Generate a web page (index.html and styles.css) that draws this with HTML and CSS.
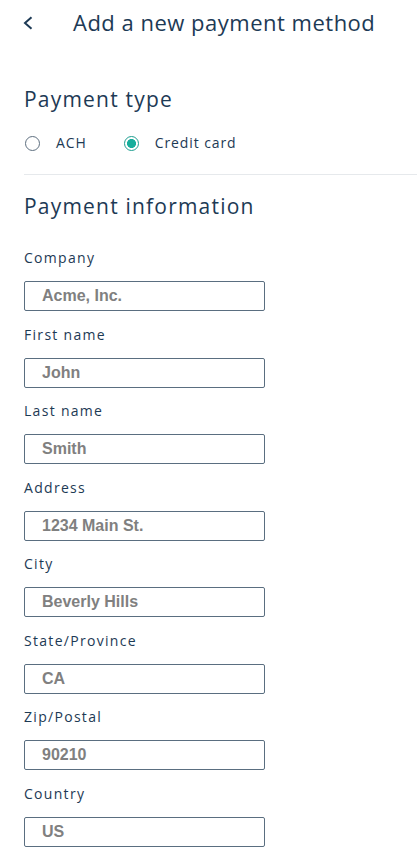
FILE: index.html
```html
<!DOCTYPE html>
<html lang="en">
<head>
<meta charset="utf-8">
<title>Add a new payment method</title>
<link rel="stylesheet" href="styles.css">
</head>
<body>
<div class="page">
  <header class="topbar">
    <button class="back" aria-label="Back">
      <svg width="10" height="14" viewBox="0 0 10 14"><path d="M8.5 1.2 L2 7 L8.5 12.8" fill="none" stroke="#1d3a55" stroke-width="2"/></svg>
    </button>
    <h1 class="title">Add a new payment method</h1>
  </header>

  <section class="type-section">
    <h2 class="section-title">Payment type</h2>
    <div class="radios">
      <label class="radio"><span class="dot"></span><span class="radio-text">ACH</span></label>
      <label class="radio checked"><span class="dot"></span><span class="radio-text">Credit card</span></label>
    </div>
  </section>

  <section class="info-section">
    <h2 class="section-title">Payment information</h2>
    <div class="fields">
      <div class="field"><div class="label">Company</div><div class="input">Acme, Inc.</div></div>
      <div class="field"><div class="label">First name</div><div class="input">John</div></div>
      <div class="field"><div class="label">Last name</div><div class="input">Smith</div></div>
      <div class="field"><div class="label">Address</div><div class="input">1234 Main St.</div></div>
      <div class="field"><div class="label">City</div><div class="input">Beverly Hills</div></div>
      <div class="field"><div class="label">State/Province</div><div class="input">CA</div></div>
      <div class="field"><div class="label">Zip/Postal</div><div class="input">90210</div></div>
      <div class="field"><div class="label">Country</div><div class="input">US</div></div>
    </div>
  </section>
</div>
</body>
</html>
```

FILE: styles.css
```css
html, body {
  margin: 0;
  padding: 0;
  background: #ffffff;
}
body {
  font-family: "Open Sans", "Noto Sans", sans-serif;
  color: #1d3a55;
}
.page {
  width: 417px;
  overflow: hidden;
}
.topbar {
  display: flex;
  align-items: center;
  height: 44px;
  padding-left: 23px;
}
.back {
  background: none;
  border: 0;
  padding: 0;
  width: 10px;
  height: 14px;
  display: flex;
  margin-top: 1px;
}
.title {
  margin: 0 0 0 40px;
  font-size: 22px;
  font-weight: 500;
  letter-spacing: 0.5px;
  color: #1d3a55;
}
.type-section {
  margin-left: 24px;
  padding-top: 41px;
  padding-bottom: 21px;
  border-bottom: 1px solid #e6e9ec;
}
.section-title {
  margin: 0;
  font-size: 21px;
  font-weight: 400;
  letter-spacing: 1.2px;
  line-height: 28px;
  color: #1d3a55;
}
.radios {
  display: flex;
  gap: 36px;
  margin-top: 20px;
}
.radio {
  display: flex;
  align-items: center;
  font-size: 14px;
  letter-spacing: 0.9px;
  line-height: 20px;
  color: #1d3a55;
}
.dot {
  box-sizing: border-box;
  width: 15px;
  height: 15px;
  border-radius: 50%;
  border: 1px solid #5e6f7f;
  margin-left: 1px;
  margin-right: 16px;
}
.radio.checked .dot {
  border: 1.5px solid #1f9e90;
  background: radial-gradient(circle, #17ae9c 0 4.2px, #ffffff 4.8px);
}
.info-section {
  padding: 17px 0 0 24px;
}
.fields {
  display: flex;
  flex-direction: column;
  gap: 13.5px;
  margin-top: 28px;
}
.field {
  display: flex;
  flex-direction: column;
}
.label {
  font-size: 14px;
  letter-spacing: 1.3px;
  line-height: 20px;
  color: #1d3a55;
  margin-bottom: 13px;
}
.input {
  box-sizing: border-box;
  width: 241px;
  height: 30px;
  border: 1px solid #5a6e80;
  border-radius: 2px;
  padding-left: 17px;
  display: flex;
  align-items: center;
  font-family: "Liberation Sans", Arial, sans-serif;
  font-size: 16px;
  font-weight: 700;
  color: #808080;
}
```
